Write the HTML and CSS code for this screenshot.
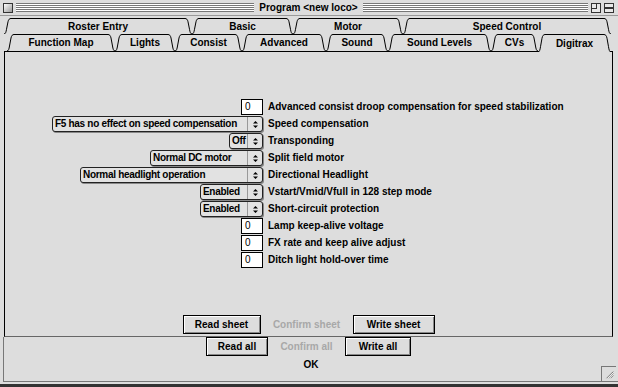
FILE: index.html
```html
<!DOCTYPE html>
<html lang="en">
<head>
    <meta charset="UTF-8" />
    <title>Program &lt;new loco&gt;</title>
    <link rel="stylesheet" href="styles.css">
</head>
<body>

<div class="window">
    <div class="titlebar">
        <span class="box close-box"></span>
        <span class="stripes stripes-left"></span>
        <span class="title">Program &lt;new loco&gt;</span>
        <span class="stripes"></span>
        <svg class="box" viewBox="0 0 10 10">
            <rect x="0.5" y="0.5" width="9" height="9" fill="#e8e8e8" stroke="#333"/>
            <rect x="0.5" y="0.5" width="5" height="5" fill="none" stroke="#333"/>
        </svg>
        <svg class="box" viewBox="0 0 10 10">
            <rect x="0.5" y="0.5" width="9" height="9" fill="#e8e8e8" stroke="#333"/>
            <path d="M1 4.5 H9 M1 5.5 H9" stroke="#333"/>
        </svg>
    </div>

    <div class="frame">
        <!-- back row of tabs -->
        <div class="tabs tabs-back">
            <div class="tab"><svg class="edge"><use href="#edge-l"/></svg><span class="tab-label">Roster Entry</span><svg class="edge"><use href="#edge-r"/></svg></div>
            <div class="tab"><svg class="edge"><use href="#edge-l"/></svg><span class="tab-label">Basic</span><svg class="edge"><use href="#edge-r"/></svg></div>
            <div class="tab"><svg class="edge"><use href="#edge-l"/></svg><span class="tab-label">Motor</span><svg class="edge"><use href="#edge-r"/></svg></div>
            <div class="tab"><svg class="edge"><use href="#edge-l"/></svg><span class="tab-label">Speed Control</span><svg class="edge"><use href="#edge-r"/></svg></div>
        </div>

        <!-- front row of tabs -->
        <div class="tabs tabs-front">
            <div class="tab"><svg class="edge"><use href="#edge-l"/></svg><span class="tab-label">Function Map</span><svg class="edge"><use href="#edge-r"/></svg></div>
            <div class="tab"><svg class="edge"><use href="#edge-l"/></svg><span class="tab-label">Lights</span><svg class="edge"><use href="#edge-r"/></svg></div>
            <div class="tab"><svg class="edge"><use href="#edge-l"/></svg><span class="tab-label">Consist</span><svg class="edge"><use href="#edge-r"/></svg></div>
            <div class="tab"><svg class="edge"><use href="#edge-l"/></svg><span class="tab-label">Advanced</span><svg class="edge"><use href="#edge-r"/></svg></div>
            <div class="tab"><svg class="edge"><use href="#edge-l"/></svg><span class="tab-label">Sound</span><svg class="edge"><use href="#edge-r"/></svg></div>
            <div class="tab"><svg class="edge"><use href="#edge-l"/></svg><span class="tab-label">Sound Levels</span><svg class="edge"><use href="#edge-r"/></svg></div>
            <div class="tab"><svg class="edge"><use href="#edge-l"/></svg><span class="tab-label">CVs</span><svg class="edge"><use href="#edge-r"/></svg></div>
            <div class="tab selected"><svg class="edge"><use href="#edge-l"/></svg><span class="tab-label">Digitrax</span><svg class="edge"><use href="#edge-r"/></svg></div>
        </div>

        <div class="panel">
            <div class="cv-list">
                <div class="cv-row">
                    <div class="ctl"><span class="field">0</span></div>
                    <span class="cv-label">Advanced consist droop compensation for speed stabilization</span>
                </div>
                <div class="cv-row">
                    <div class="ctl"><div class="popup popup-f5"><span class="popup-value">F5 has no effect on speed compensation</span><span class="popup-arrows"><svg viewBox="0 0 5 9"><path d="M0 3.5 L2.5 1 L5 3.5 Z M0 5.5 L2.5 8 L5 5.5 Z"/></svg></span></div></div>
                    <span class="cv-label">Speed compensation</span>
                </div>
                <div class="cv-row">
                    <div class="ctl"><div class="popup popup-off"><span class="popup-value">Off</span><span class="popup-arrows"><svg viewBox="0 0 5 9"><path d="M0 3.5 L2.5 1 L5 3.5 Z M0 5.5 L2.5 8 L5 5.5 Z"/></svg></span></div></div>
                    <span class="cv-label">Transponding</span>
                </div>
                <div class="cv-row">
                    <div class="ctl"><div class="popup popup-motor"><span class="popup-value">Normal DC motor</span><span class="popup-arrows"><svg viewBox="0 0 5 9"><path d="M0 3.5 L2.5 1 L5 3.5 Z M0 5.5 L2.5 8 L5 5.5 Z"/></svg></span></div></div>
                    <span class="cv-label">Split field motor</span>
                </div>
                <div class="cv-row">
                    <div class="ctl"><div class="popup popup-headlight"><span class="popup-value">Normal headlight operation</span><span class="popup-arrows"><svg viewBox="0 0 5 9"><path d="M0 3.5 L2.5 1 L5 3.5 Z M0 5.5 L2.5 8 L5 5.5 Z"/></svg></span></div></div>
                    <span class="cv-label">Directional Headlight</span>
                </div>
                <div class="cv-row">
                    <div class="ctl"><div class="popup popup-enabled"><span class="popup-value">Enabled</span><span class="popup-arrows"><svg viewBox="0 0 5 9"><path d="M0 3.5 L2.5 1 L5 3.5 Z M0 5.5 L2.5 8 L5 5.5 Z"/></svg></span></div></div>
                    <span class="cv-label">Vstart/Vmid/Vfull in 128 step mode</span>
                </div>
                <div class="cv-row">
                    <div class="ctl"><div class="popup popup-enabled"><span class="popup-value">Enabled</span><span class="popup-arrows"><svg viewBox="0 0 5 9"><path d="M0 3.5 L2.5 1 L5 3.5 Z M0 5.5 L2.5 8 L5 5.5 Z"/></svg></span></div></div>
                    <span class="cv-label">Short-circuit protection</span>
                </div>
                <div class="cv-row">
                    <div class="ctl"><span class="field">0</span></div>
                    <span class="cv-label">Lamp keep-alive voltage</span>
                </div>
                <div class="cv-row">
                    <div class="ctl"><span class="field">0</span></div>
                    <span class="cv-label">FX rate and keep alive adjust</span>
                </div>
                <div class="cv-row">
                    <div class="ctl"><span class="field">0</span></div>
                    <span class="cv-label">Ditch light hold-over time</span>
                </div>
            </div>

            <div class="button-row sheet-buttons">
                <button class="btn">Read sheet</button>
                <button class="btn" disabled>Confirm sheet</button>
                <button class="btn">Write sheet</button>
            </div>
        </div>

        <div class="footer">
            <div class="button-row all-buttons">
                <button class="btn">Read all</button>
                <button class="btn" disabled>Confirm all</button>
                <button class="btn">Write all</button>
            </div>
            <div class="status">OK</div>
        </div>
    </div>

    <svg class="grow-box" viewBox="0 0 15 15">
        <path d="M5 12 L12 5 M7 12 L12 7 M9 12 L12 9" stroke="#555"/>
        <path d="M6 12 L12 6 M8 12 L12 8" stroke="#fff"/>
    </svg>
</div>

<!-- shared tab edge shapes -->
<svg class="defs" width="0" height="0" aria-hidden="true">
    <symbol id="edge-l" viewBox="0 0 7 17" preserveAspectRatio="none">
        <path d="M0 17 C1.5 17 2 15 2.5 12 L4 4 C4.5 1.5 5.5 0.5 7 0.5 V17 Z" fill="#dddddd"/>
        <path d="M0 17 C1.5 17 2 15 2.5 12 L4 4 C4.5 1.5 5.5 0.5 7 0.5" fill="none" stroke="#000" vector-effect="non-scaling-stroke"/>
    </symbol>
    <symbol id="edge-r" viewBox="0 0 7 17" preserveAspectRatio="none">
        <path d="M0 0.5 C1.5 0.5 2.5 1.5 3 4 L4.5 12 C5 15 5.5 17 7 17 H0 Z" fill="#dddddd"/>
        <path d="M0 0.5 C1.5 0.5 2.5 1.5 3 4 L4.5 12 C5 15 5.5 17 7 17" fill="none" stroke="#000" vector-effect="non-scaling-stroke"/>
    </symbol>
</svg>

</body>
</html>
```

FILE: styles.css
```css
* {
    box-sizing: border-box;
}

html, body {
    margin: 0;
    overflow: hidden;
}

body {
    background: #dddddd;
    font-family: 'Liberation Sans', Arial, sans-serif;
    font-size: 10px;
    font-weight: bold;
    color: #000;
}

.window {
    position: relative;
    width: 618px;
    height: 387px;
    display: flex;
    flex-direction: column;
    background: #dddddd;
    border-bottom: 3px solid #333;
}

/* title bar */

.titlebar {
    display: flex;
    align-items: center;
    gap: 3px;
    height: 16px;
    padding: 0 4px 0 3px;
    border-bottom: 1px solid #999;
}

.box {
    width: 10px;
    height: 10px;
    flex: none;
}

.close-box {
    border: 1px solid #333;
    background: linear-gradient(135deg, #fff, #999);
}

.stripes {
    flex: 1 0 0;
    height: 9px;
    background: repeating-linear-gradient(to bottom, #777 0 1px, #fff 1px 2px);
}

.stripes-left {
    flex: 1 0 13px;
}

.title {
    padding: 0 2px;
    white-space: nowrap;
}

/* window body */

.frame {
    flex: 1;
    display: flex;
    flex-direction: column;
    padding: 2px 5px 0 4px;
}

.tabs {
    display: grid;
    align-items: start;
}

.tabs-back {
    height: 16px;
    grid-template-columns: 188px 101px 110px 208px;
}

.tabs-front {
    height: 18px;
    padding-left: 3px;
    border-bottom: 1px solid #000;
    grid-template-columns: 108px 60px 67px 84px 62px 103px 47px 73px;
}

.tab {
    display: flex;
    height: 16px;
}

.tabs-front .tab {
    height: 17px;
}

.tabs-front .tab.selected {
    height: 18px;
    margin-bottom: -1px;
}

.edge {
    display: block;
    width: 7px;
    height: 16px;
    flex: none;
}

.tabs-front .edge {
    height: 17px;
}

.tabs-front .selected .edge {
    height: 18px;
}

.tab-label {
    flex: 1;
    display: flex;
    align-items: center;
    justify-content: center;
    border-top: 1px solid #000;
    background: #dddddd;
    white-space: nowrap;
    padding-bottom: 1px;
}

.defs {
    display: block;
    width: 0;
    height: 0;
}

/* tab content */

.panel {
    flex: 1;
    display: flex;
    flex-direction: column;
    padding-top: 46px;
    border-left: 1px solid #000;
    border-right: 1px solid #000;
    border-bottom: 1px solid #666;
}

.cv-row {
    display: grid;
    grid-template-columns: 258px auto;
    column-gap: 5px;
    height: 17px;
    align-items: start;
}

.ctl {
    display: flex;
    justify-content: flex-end;
    padding-top: 1px;
}

.cv-label {
    line-height: 16px;
    margin-top: 1px;
    white-space: nowrap;
}

.field {
    width: 22px;
    height: 16px;
    padding-left: 3px;
    line-height: 14px;
    font-weight: normal;
    background: #fff;
    border: 1px solid #000;
}

.popup {
    display: flex;
    height: 16px;
    border: 1px solid #222;
    border-radius: 3px;
    background: #e2e2e2;
    box-shadow: 1px 1px 0 #888;
}

.popup-value {
    flex: 1;
    padding-left: 2px;
    line-height: 14px;
    letter-spacing: -0.3px;
    white-space: nowrap;
    overflow: hidden;
}

.popup-arrows {
    width: 15px;
    flex: none;
    display: flex;
    align-items: center;
    justify-content: center;
    border-left: 1px solid #999;
}

.popup-arrows svg {
    width: 5px;
    height: 9px;
}

.popup-f5 { width: 211px; }
.popup-off { width: 34px; }
.popup-motor { width: 113px; }
.popup-headlight { width: 183px; }
.popup-enabled { width: 63px; }

/* buttons */

.button-row {
    display: grid;
    justify-content: center;
}

.sheet-buttons {
    margin-top: auto;
    padding-bottom: 2px;
    grid-template-columns: 78px 92px 82px;
}

.all-buttons {
    padding-right: 5px;
    grid-template-columns: 62px 77px 66px;
}

.btn {
    height: 19px;
    padding: 0;
    font: inherit;
    color: #000;
    background: #dddddd;
    border: 1px solid #000;
    box-shadow: inset 1px 1px 0 #fff, inset -1px -1px 0 #888;
}

.btn:disabled {
    color: #a8a8a8;
    border-color: transparent;
    box-shadow: none;
}

.footer {
    height: 45px;
    margin: 0 -5px 2px -1px;
    border-left: 1px solid #777;
    border-bottom: 1px solid #777;
}

.status {
    text-align: center;
    line-height: 15px;
    margin-top: 1px;
}

.grow-box {
    position: absolute;
    right: 2px;
    bottom: 3px;
    width: 15px;
    height: 15px;
    border-top: 1px solid #777;
    border-left: 1px solid #777;
}
```
